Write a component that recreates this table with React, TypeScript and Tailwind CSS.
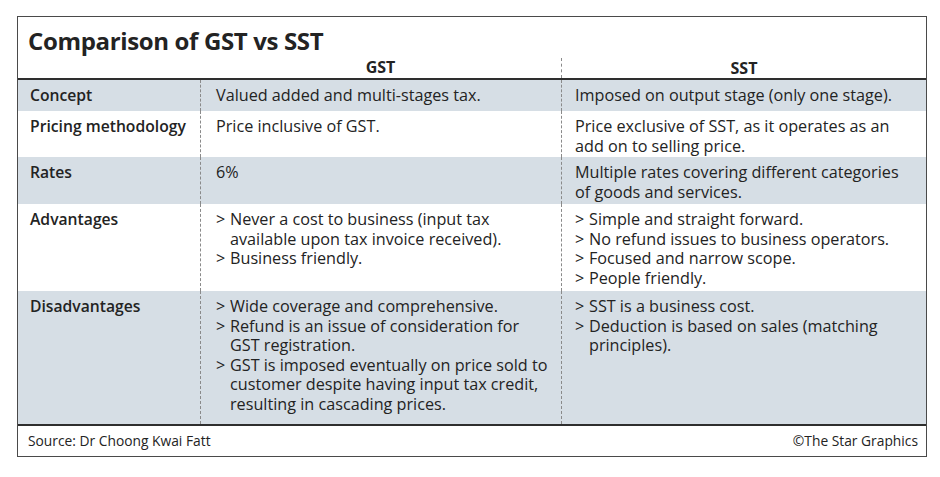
const rows = [
  {
    label: 'Concept',
    gst: ['Valued added and multi-stages tax.'],
    sst: ['Imposed on output stage (only one stage).'],
    bullets: false,
    shaded: true,
    h: 'h-[31px]',
  },
  {
    label: 'Pricing methodology',
    gst: ['Price inclusive of GST.'],
    sst: ['Price exclusive of SST, as it operates as an add on to selling price.'],
    bullets: false,
    shaded: false,
    h: 'h-[46px]',
  },
  {
    label: 'Rates',
    gst: ['6%'],
    sst: ['Multiple rates covering different categories of goods and services.'],
    bullets: false,
    shaded: true,
    h: 'h-[47px]',
  },
  {
    label: 'Advantages',
    gst: [
      'Never a cost to business (input tax available upon tax invoice received).',
      'Business friendly.',
    ],
    sst: [
      'Simple and straight forward.',
      'No refund issues to business operators.',
      'Focused and narrow scope.',
      'People friendly.',
    ],
    bullets: true,
    shaded: false,
    h: 'h-[87px]',
  },
  {
    label: 'Disadvantages',
    gst: [
      'Wide coverage and comprehensive.',
      'Refund is an issue of consideration for GST registration.',
      'GST is imposed eventually on price sold to customer despite having input tax credit, resulting in cascading prices.',
    ],
    sst: ['SST is a business cost.', 'Deduction is based on sales (matching principles).'],
    bullets: true,
    shaded: true,
    h: 'h-[133px]',
  },
];

function Cell({ items, bullets }: { items: string[]; bullets: boolean }) {
  if (!bullets) {
    return <p>{items[0]}</p>;
  }
  return (
    <ul>
      {items.map((t) => (
        <li key={t} className="flex">
          <span className="w-[14px] shrink-0">&gt;</span>
          <span>{t}</span>
        </li>
      ))}
    </ul>
  );
}

export default function App() {
  return (
    <div className="w-[940px] h-[477px] bg-white pt-[16px] pl-[17px] text-[#232323] font-['Open_Sans',sans-serif]">
      <div className="w-[910px] border border-[#4a4a4a]">
        {/* titre */}
        <h1 className="px-[10px] pt-[10px] text-[24px] leading-[28px] font-bold tracking-[-0.35px]">
          Comparison of GST vs SST
        </h1>

        {/* entêtes */}
        <div className="grid grid-cols-[182px_361px_1fr] h-[25px] text-[16px] font-bold leading-[22px] border-b-2 border-[#2e2e2e]">
          <div />
          <div className="text-center pt-[1px]">GST</div>
          <div className="pt-[3px]">
            <div className="text-center h-full leading-[20px] border-l border-dashed border-[#8a8a8a]">SST</div>
          </div>
        </div>

        {/* lignes */}
        {rows.map((r) => (
          <div
            key={r.label}
            className={`grid grid-cols-[182px_361px_1fr] text-[16.2px] leading-[19.6px] ${r.h} ${
              r.shaded ? 'bg-[#d6dee5]' : 'bg-white'
            }`}
          >
            <div className="pl-[12px] pt-[6px] text-[15.7px] font-semibold">{r.label}</div>
            <div className="pl-[15px] pr-[10px] pt-[6px] border-l border-dashed border-[#8a8a8a]">
              <Cell items={r.gst} bullets={r.bullets} />
            </div>
            <div className="pl-[13px] pr-[24px] pt-[6px] border-l border-dashed border-[#8a8a8a]">
              <Cell items={r.sst} bullets={r.bullets} />
            </div>
          </div>
        ))}

        {/* pied */}
        <div className="flex justify-between items-center h-[32px] pl-[10px] pr-[8px] border-t-2 border-[#2e2e2e] text-[13.8px]">
          <span>Source: Dr Choong Kwai Fatt</span>
          <span>©The Star Graphics</span>
        </div>
      </div>
    </div>
  );
}
